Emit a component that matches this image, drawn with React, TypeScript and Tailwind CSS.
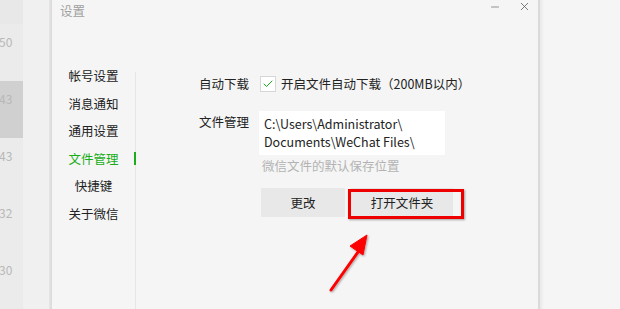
import { Check, Minus, X } from "lucide-react";

const cjk = { fontFamily: '"Noto Sans CJK SC", "Noto Sans", sans-serif' };

const navItems = ["帐号设置", "消息通知", "通用设置", "文件管理", "快捷键", "关于微信"];
const sideNumbers = ["50", "43", "43", "32", "30"];

const App = () => {
  return (
    <div
      className="relative w-[620px] h-[309px] flex overflow-hidden bg-[#f5f5f5] text-[#333]"
      style={cjk}
    >
      {/* chat list behind the dialog */}
      <div className="w-[23px] flex flex-col bg-[#ebebeb] shrink-0">
        <div className="h-[24px] bg-[#e8e8e8]" />
        {sideNumbers.map((n, i) => (
          <div
            key={i}
            className={`h-[57px] pt-[9px] text-[12px] leading-[18px] text-[#b8b8b8] -ml-[1px] ${
              i === 1 ? "bg-[#d0d0d0]" : ""
            }`}
          >
            {n}
          </div>
        ))}
      </div>
      <div className="w-[26px] bg-[#f0f0f0] shrink-0" />
      <div className="w-[3px] bg-gradient-to-r from-[#e6e6e6] to-[#d9d9d9] shrink-0" />

      {/* settings dialog */}
      <div className="w-[486px] shrink-0 flex flex-col bg-[#f5f5f5]">
        <div className="h-[62px] relative shrink-0">
          <div className="pl-[8px] pt-[1px] text-[12.5px] leading-[20px] text-[#a0a0a0]">设置</div>
          <Minus className="absolute left-[437px] top-[1px] w-[12px] h-[12px] text-[#707070]" strokeWidth={1.5} />
          <X className="absolute left-[466px] top-[0px] w-[13px] h-[13px] text-[#606060]" strokeWidth={1.5} />
        </div>

        <div className="flex flex-1">
          <div className="w-[83px] flex flex-col items-center text-[12.5px] leading-[27.5px] shrink-0">
            {navItems.map((t) => (
              <div key={t} className={t === "文件管理" ? "text-[#1aad19]" : "text-[#222]"}>
                {t}
              </div>
            ))}
          </div>
          <div className="w-px bg-[#e6e6e6] mt-[10px] relative shrink-0">
            <div className="absolute -left-[1px] top-[80px] w-[2px] h-[13px] bg-[#1aad19]" />
          </div>

          <div className="pl-[63px] flex flex-col text-[12.5px] whitespace-nowrap">
            <div className="flex items-center mt-[14px] h-[16px]">
              <div className="w-[50px] mr-[11px] shrink-0 text-[#222]">自动下载</div>
              <div className="w-[16px] h-[16px] bg-white border border-[#d6d6d6] flex items-center justify-center shrink-0">
                <Check className="w-[12px] h-[12px] text-[#1aad19]" strokeWidth={2} />
              </div>
              <div className="ml-[5px] text-[#222]">开启文件自动下载（200MB以内）</div>
            </div>

            <div className="flex mt-[19px]">
              <div className="w-[50px] mr-[11px] shrink-0 pt-[2px] leading-[18px] text-[#222]">文件管理</div>
              <div className="w-[186px] h-[44px] bg-white pl-[5px] pt-[4px] leading-[18px] text-[#222] -ml-[1px] shrink-0">
                <div>C:\Users\Administrator\</div>
                <div>Documents\WeChat Files\</div>
              </div>
            </div>
            <div className="ml-[63px] mt-[2px] leading-[18px] text-[#b3b3b3]">微信文件的默认保存位置</div>

            <div className="flex mt-[13px] ml-[62px] gap-[6px]">
              <button className="w-[84px] h-[29px] bg-[#e8e8e8] text-[#222] leading-[29px]">更改</button>
              <div className="relative">
                <button className="w-[102px] h-[29px] bg-[#e8e8e8] text-[#222] leading-[29px]">
                  打开文件夹
                </button>
                <div className="absolute -left-[3px] top-[1px] w-[116px] h-[30px] border-[3px] border-[#ee0000] shadow-[1px_1px_2px_rgba(0,0,0,0.35)]" />
              </div>
            </div>
          </div>
        </div>
      </div>

      <div className="w-[2px] bg-[#dadada] shrink-0" />
      <div className="w-[4px] bg-gradient-to-r from-[#e8e8e8] to-[#f5f5f5] shrink-0" />
      <div className="flex-1 bg-[#f5f5f5]" />

      {/* annotation arrow */}
      <svg className="absolute left-0 top-0 pointer-events-none" width="620" height="309">
        <defs>
          <filter id="sh" x="-20%" y="-20%" width="140%" height="140%">
            <feDropShadow dx="1" dy="1" stdDeviation="0.8" floodColor="#000" floodOpacity="0.35" />
          </filter>
        </defs>
        <g filter="url(#sh)" fill="#ff0000" stroke="#ff0000">
          <line x1="331" y1="290" x2="358" y2="252" strokeWidth="3" strokeLinecap="round" />
          <polygon points="367,235 350,246 363,255" strokeWidth="1" strokeLinejoin="round" />
        </g>
      </svg>
    </div>
  );
};

export default App;
